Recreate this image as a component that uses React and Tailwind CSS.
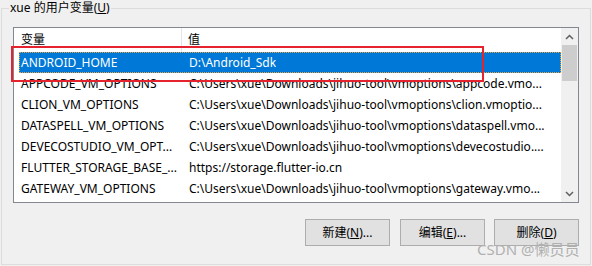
import React from "react";

const rows = [
  { name: "ANDROID_HOME", value: "D:\\Android_Sdk", selected: true },
  { name: "APPCODE_VM_OPTIONS", value: "C:\\Users\\xue\\Downloads\\jihuo-tool\\vmoptions\\appcode.vmo..." },
  { name: "CLION_VM_OPTIONS", value: "C:\\Users\\xue\\Downloads\\jihuo-tool\\vmoptions\\clion.vmoptio..." },
  { name: "DATASPELL_VM_OPTIONS", value: "C:\\Users\\xue\\Downloads\\jihuo-tool\\vmoptions\\dataspell.vmo..." },
  { name: "DEVECOSTUDIO_VM_OPT...", value: "C:\\Users\\xue\\Downloads\\jihuo-tool\\vmoptions\\devecostudio...." },
  { name: "FLUTTER_STORAGE_BASE_...", value: "https://storage.flutter-io.cn" },
  { name: "GATEWAY_VM_OPTIONS", value: "C:\\Users\\xue\\Downloads\\jihuo-tool\\vmoptions\\gateway.vmo..." },
];

const Chevron = ({ up }) => (
  <svg width="9" height="6" viewBox="0 0 9 6">
    <path
      d={up ? "M1 5 L4.5 1.5 L8 5" : "M1 1 L4.5 4.5 L8 1"}
      fill="none"
      stroke="#606060"
      strokeWidth="1.5"
    />
  </svg>
);

function WinButton({ label, hotkey, suffix }) {
  return (
    <button className="w-[85px] h-[27px] bg-[#e1e1e1] border border-[#adadad] text-[12px] text-black flex items-center justify-center">
      {label}(<span className="underline">{hotkey}</span>){suffix}
    </button>
  );
}

export default function App() {
  return (
    <div className="relative w-[592px] h-[266px] bg-[#f0f0f0] overflow-hidden font-['Noto_Sans','Noto_Sans_CJK_SC',sans-serif] text-[12px] text-black">
      {/* group box */}
      <div className="relative mt-[8px] ml-[1px] w-[590px] h-[257px] border border-[#dcdcdc]">
        <div className="absolute -top-[10px] left-[7px] bg-[#f0f0f0] px-[1px] leading-[18px]">
          xue 的用户变量(<span className="underline">U</span>)
        </div>

        {/* list view */}
        <div className="ml-[11px] mt-[18px] w-[566px] h-[176px] border border-[#828790] bg-white flex overflow-hidden">
          <div className="w-[547px] flex flex-col">
            <div className="h-[24px] flex items-center shrink-0">
              <div className="w-[168px] h-full flex items-center pl-[7px] border-r border-[#e5e5e5]">变量</div>
              <div className="pl-[6px]">值</div>
            </div>
            {rows.map((r) => (
              <div
                key={r.name}
                className={`h-[21px] shrink-0 ml-[5px] flex items-center whitespace-nowrap ${
                  r.selected ? "bg-[#0078d7] text-white border border-dotted border-[#e9a23b]" : "border border-transparent"
                }`}
              >
                <div className="w-[162px] pl-[1px] overflow-hidden">{r.name}</div>
                <div className="pl-[7px] overflow-hidden">{r.value}</div>
              </div>
            ))}
          </div>

          {/* scrollbar */}
          <div className="w-[17px] bg-[#f0f0f0] flex flex-col">
            <div className="h-[17px] flex items-center justify-center">
              <Chevron up />
            </div>
            <div className="mx-[1px] h-[36px] bg-[#cdcdcd]" />
            <div className="flex-1" />
            <div className="h-[17px] flex items-center justify-center">
              <Chevron />
            </div>
          </div>
        </div>

        {/* buttons */}
        <div className="mt-[16px] pr-[11px] flex justify-end gap-[9px]">
          <div className="mr-[1px]">
            <WinButton label="新建" hotkey="N" suffix="..." />
          </div>
          <WinButton label="编辑" hotkey="E" suffix="..." />
          <WinButton label="删除" hotkey="D" suffix="" />
        </div>
      </div>

      {/* red highlight */}
      <div className="absolute left-[11px] top-[46px] w-[473px] h-[36px] border-2 border-[#e5232f]" />

      {/* watermark */}
      <div className="absolute left-[477px] top-[240px] text-[15px] leading-[18px] text-[#b0b0b0] whitespace-nowrap">
        CSDN @懒员员
      </div>
    </div>
  );
}
